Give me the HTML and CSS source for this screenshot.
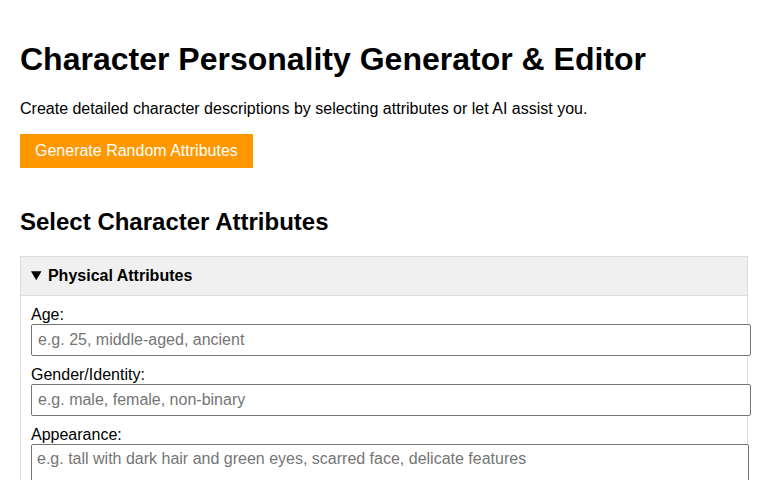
FILE: index.html
```html
<!DOCTYPE html>
<html lang="en">
<head>
<meta charset="utf-8">
<title>Character Personality Generator &amp; Editor</title>
<link rel="stylesheet" href="styles.css">
</head>
<body>
<h1>Character Personality Generator &amp; Editor</h1>
<p class="intro">Create detailed character descriptions by selecting attributes or let AI assist you.</p>
<div class="actions">
  <button class="btn-generate" type="button">Generate Random Attributes</button>
</div>
<h2>Select Character Attributes</h2>
<details class="group" open>
  <summary>Physical Attributes</summary>
  <div class="group-body">
    <label for="age">Age:</label>
    <input id="age" type="text" placeholder="e.g. 25, middle-aged, ancient">
    <label for="gender">Gender/Identity:</label>
    <input id="gender" type="text" placeholder="e.g. male, female, non-binary">
    <label for="appearance">Appearance:</label>
    <textarea id="appearance" rows="3" placeholder="e.g. tall with dark hair and green eyes, scarred face, delicate features"></textarea>
  </div>
</details>
</body>
</html>
```

FILE: styles.css
```css
html, body {
  margin: 0;
}
body {
  padding: 20px;
  font-family: "Liberation Sans", Arial, sans-serif;
  font-size: 16px;
  color: #000;
  background: #fff;
}
h1 {
  font-size: 32px;
  margin: 21.44px 0;
}
.intro {
  margin: 16px 0;
}
.actions {
  margin-bottom: 40px;
}
.btn-generate {
  font-family: inherit;
  font-size: 16px;
  color: #fff;
  background: #ff9800;
  border: none;
  padding: 8px 15px;
  margin: 0;
  line-height: normal;
  cursor: pointer;
}
h2 {
  font-size: 24px;
  margin: 19.92px 0;
}
.group {
  border: 1px solid #ddd;
  margin-top: 19px;
}
.group summary {
  background: #f0f0f0;
  padding: 10px;
  font-weight: bold;
  border-bottom: 1px solid #ddd;
  cursor: pointer;
}
.group-body {
  padding: 10px;
}
.group-body label {
  display: block;
}
.group-body input,
.group-body textarea {
  display: block;
  width: 100%;
  font-family: inherit;
  font-size: 16px;
  border: 1px solid #767676;
  border-radius: 2px;
  margin: 0 0 10px;
}
.group-body input {
  padding: 6px;
}
.group-body textarea {
  padding: 5px;
  resize: vertical;
}
```
